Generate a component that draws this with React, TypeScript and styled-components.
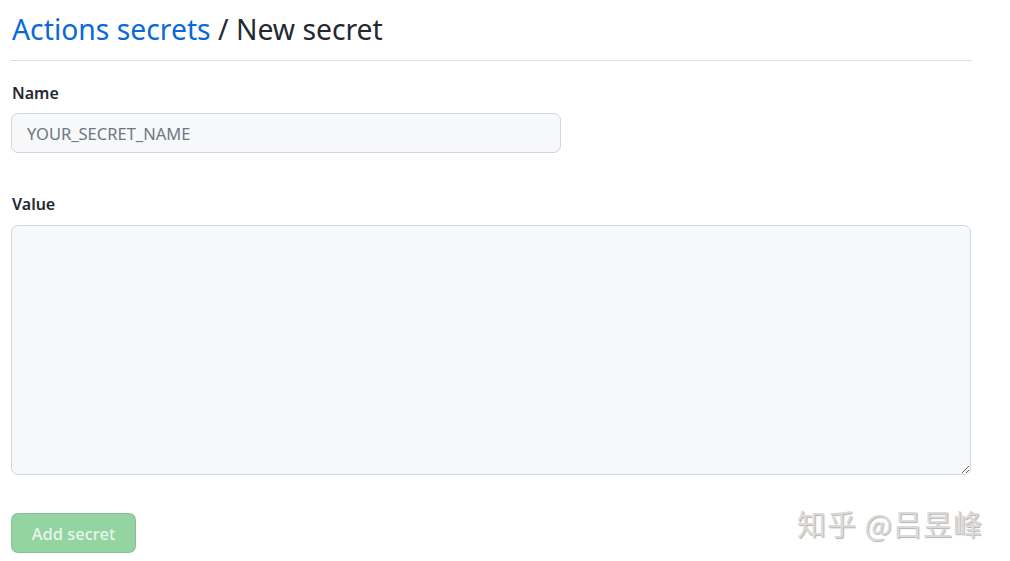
import React from "react";
import styled, { createGlobalStyle } from "styled-components";

const Global = createGlobalStyle`
  html, body { margin: 0; padding: 0; background: #ffffff; }
  body { font-family: "Noto Sans", "Open Sans", sans-serif; color: #24292f; }
  * { box-sizing: border-box; }
`;

const Page = styled.div`
  position: relative;
  width: 1010px;
  height: 561px;
  padding: 8px 39px 0 11px;
`;

const Header = styled.div`
  display: flex;
  align-items: baseline;
  padding: 0 0 9px 1px;
  border-bottom: 1px solid #d8dee4;
  margin-right: -1px;
`;

const Title = styled.h1`
  margin: 0;
  font-size: 28.3px;
  font-weight: 400;
  line-height: 43px;
  color: #24292f;
`;

const Crumb = styled.a`
  color: #0969da;
  text-decoration: none;
`;

const Form = styled.form`
  display: flex;
  flex-direction: column;
  padding-top: 20px;
`;

const Field = styled.div<{ $gap: number }>`
  display: flex;
  flex-direction: column;
  margin-bottom: ${(p) => p.$gap}px;
`;

const Label = styled.label<{ $space: number }>`
  font-size: 16px;
  font-weight: 600;
  line-height: 24px;
  margin: 0 0 ${(p) => p.$space}px 1px;
  color: #24292f;
`;

const Input = styled.input`
  width: 550px;
  height: 40px;
  padding: 0 15px;
  font-family: "Noto Sans", "Open Sans", sans-serif;
  font-size: 16.5px;
  color: #24292f;
  background: #f6f8fa;
  border: 1px solid #d0d7de;
  border-radius: 7px;
  outline: none;
  &::placeholder { color: #6e7781; }
`;

const TextArea = styled.textarea`
  width: 960px;
  height: 250px;
  padding: 10px 15px;
  font-family: "Noto Sans", sans-serif;
  font-size: 16px;
  background: #f6f8fa;
  border: 1px solid #d0d7de;
  border-radius: 7px;
  resize: vertical;
  outline: none;
`;

const Button = styled.button`
  align-self: flex-start;
  width: 125px;
  height: 40px;
  padding: 0;
  font-family: "Noto Sans", "Open Sans", sans-serif;
  font-size: 16.5px;
  font-weight: 500;
  color: rgba(255, 255, 255, 0.8);
  background: #94d3a2;
  border: 1px solid rgba(27, 31, 36, 0.1);
  border-radius: 7px;
  cursor: not-allowed;
`;

const Watermark = styled.div`
  position: absolute;
  left: 797px;
  top: 502px;
  font-family: "Noto Sans CJK SC", "Noto Sans", sans-serif;
  font-size: 29px;
  letter-spacing: 1px;
  color: #dadada;
  text-shadow: 1px 1px 1px rgba(0, 0, 0, 0.3);
  white-space: nowrap;
  pointer-events: none;
`;

export default function App() {
  return (
    <>
      <Global />
      <Page>
        <Header>
          <Title>
            <Crumb href="#">Actions secrets</Crumb> / New secret
          </Title>
        </Header>
        <Form onSubmit={(e) => e.preventDefault()}>
          <Field $gap={39}>
            <Label $space={8} htmlFor="name">Name</Label>
            <Input id="name" placeholder="YOUR_SECRET_NAME" />
          </Field>
          <Field $gap={38}>
            <Label $space={9} htmlFor="value">Value</Label>
            <TextArea id="value" />
          </Field>
          <Button type="submit" disabled>Add secret</Button>
        </Form>
        <Watermark>知乎 @吕昱峰</Watermark>
      </Page>
    </>
  );
}
